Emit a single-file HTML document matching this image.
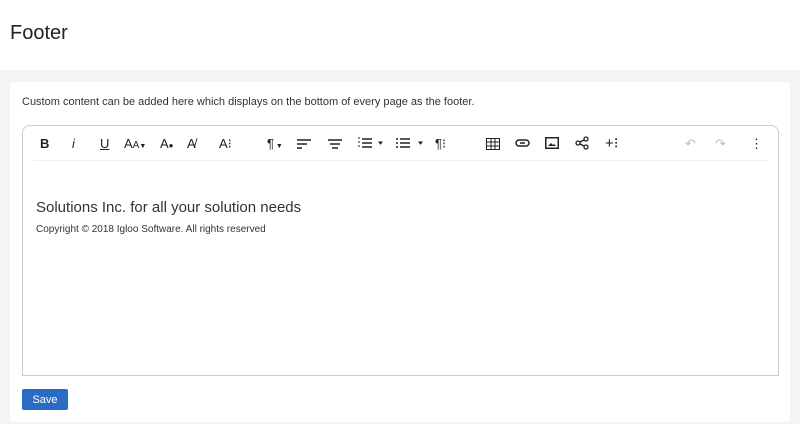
<!DOCTYPE html>
<html><head><style>
body{margin:0;width:800px;height:424px;background:#f4f4f4;font-family:"Liberation Sans",sans-serif;overflow:hidden;position:relative}
.hdr{position:absolute;left:0;top:0;width:800px;height:70px;background:#fff}
.hdr h1{position:absolute;left:10px;top:22px;margin:0;font-weight:normal;font-size:20px;color:#222}
.card{position:absolute;left:10px;top:82px;width:780px;height:340px;background:#fff}
.desc{position:absolute;left:22px;top:96px;font-size:11px;color:#333}
.ed{position:absolute;left:22px;top:125px;width:755px;height:249px;border:1px solid #ccc;border-radius:8px 8px 0 0}
.sep{position:absolute;left:10px;right:10px;top:34px;height:1px;background:#eee}
.i{position:absolute;top:10px;font-size:13px;color:#222;line-height:16px}
.i svg{display:block}
.l1{position:absolute;left:13px;top:73px;font-size:15px;color:#333}
.l2{position:absolute;left:13px;top:98px;font-size:10px;color:#333}
.btn{position:absolute;left:22px;top:389px;width:46px;height:21px;background:#2a6cc4;border-radius:2px;color:#fff;font-size:11px;text-align:center;line-height:23px}
</style></head><body>
<div class="hdr"><h1>Footer</h1></div>
<div class="card"></div>
<div class="desc">Custom content can be added here which displays on the bottom of every page as the footer.</div>
<div class="ed">
<div class="i" style="left:17px;font-weight:bold">B</div>
<div class="i" style="left:49px;font-style:italic">i</div>
<div class="i" style="left:77px;text-decoration:underline">U</div>
<div class="i" style="left:101px">A<span style="font-size:10px">A</span><span style="font-size:7px">▼</span></div>
<div class="i" style="left:137px">A<span style="font-size:8px">●</span></div>
<div class="i" style="left:164px">A̸</div>
<div class="i" style="left:196px">A⁝</div>
<div class="i" style="left:244px">¶<span style="font-size:7px"> ▼</span></div>
<div class="i" style="left:274px;top:12px"><svg width="14" height="12"><path d="M0 2h14M0 6h10M0 10h5" stroke="#222" stroke-width="1.5"/></svg></div>
<div class="i" style="left:305px;top:12px"><svg width="14" height="12"><path d="M0 2h14M2 6h10M4 10h6" stroke="#222" stroke-width="1.5"/></svg></div>
<div class="i" style="left:335px;top:11px"><svg width="26" height="12"><path d="M4 2h10M4 6h10M4 10h10" stroke="#222" stroke-width="1.5"/><path d="M0 1h2M0 5h2M0 9h2" stroke="#222"/><path d="M21 5l3 0-1.5 2z" fill="#222" stroke="#222"/></svg></div>
<div class="i" style="left:373px;top:11px"><svg width="30" height="12"><path d="M4 2h10M4 6h10M4 10h10" stroke="#222" stroke-width="1.5"/><path d="M0 2h2M0 6h2M0 10h2" stroke="#222" stroke-width="1.5"/><path d="M23 5l3 0-1.5 2z" fill="#222" stroke="#222"/></svg></div>
<div class="i" style="left:412px">¶⁝</div>
<div class="i" style="left:463px;top:12px"><svg width="14" height="12"><rect x=".5" y=".5" width="13" height="11" fill="none" stroke="#222"/><path d="M0 4h14M0 8h14M5 0v12M9 0v12" stroke="#222"/></svg></div>
<div class="i" style="left:492px;top:13px"><svg width="15" height="8"><rect x="1" y="1" width="13" height="6" rx="3" fill="none" stroke="#222" stroke-width="1.5"/><path d="M5 4h5" stroke="#222" stroke-width="1.5"/></svg></div>
<div class="i" style="left:522px;top:11px"><svg width="14" height="12"><rect x=".75" y=".75" width="12.5" height="10.5" fill="none" stroke="#222" stroke-width="1.5"/><path d="M3 9l3-3 2 2 1-1 2 2z" fill="#222"/></svg></div>
<div class="i" style="left:552px;top:10px"><svg width="14" height="14"><circle cx="3" cy="7" r="2" fill="none" stroke="#222" stroke-width="1.3"/><circle cx="11" cy="3" r="2" fill="none" stroke="#222" stroke-width="1.3"/><circle cx="11" cy="11" r="2" fill="none" stroke="#222" stroke-width="1.3"/><path d="M5 6l4-2M5 8l4 2" stroke="#222" stroke-width="1.3"/></svg></div>
<div class="i" style="left:582px;font-size:15px">+⁝</div>
<div class="i" style="left:662px;color:#bbb">↶</div>
<div class="i" style="left:692px;color:#bbb">↷</div>
<div class="i" style="left:727px">⋮</div>
<div class="sep"></div>
<div class="l1">Solutions Inc. for all your solution needs</div>
<div class="l2">Copyright © 2018 Igloo Software. All rights reserved</div>
</div>
<div class="btn">Save</div>
</body></html>
